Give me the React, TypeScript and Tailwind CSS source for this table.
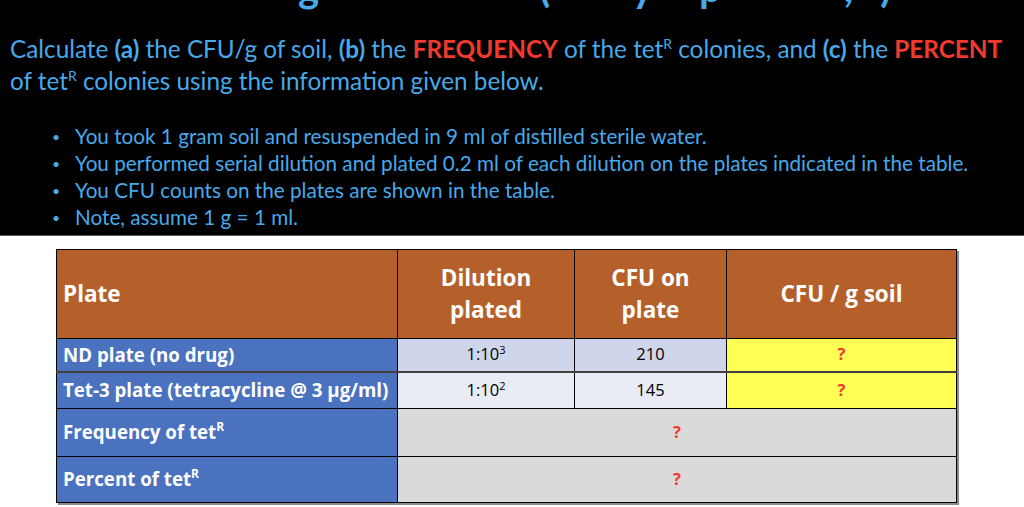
export default function App() {
  const tail = "relative -top-[33px] text-[40px] font-bold leading-[40px]";
  return (
    <div className="w-[1024px] h-[507px] bg-white overflow-hidden font-['Lato',sans-serif]">
      <div className="bg-black h-[236px] border-b border-[#595959] text-[#48a9ea]">
        {/* title of the slide, cut off at the top */}
        <div className="relative h-[10px] overflow-hidden">
          <span className={`absolute left-[298px] ${tail}`}>g</span>
          <span className={`absolute left-[518px] ${tail}`}>(</span>
          <span className={`absolute left-[600px] ${tail}`}>y</span>
          <span className={`absolute left-[646px] ${tail}`}>p</span>
          <span className={`absolute left-[768px] ${tail}`}>,</span>
          <span className={`absolute left-[795px] ${tail}`}>)</span>
        </div>
        <p className="mt-[23px] pl-[10px] text-[24.3px] leading-[32px]">
          Calculate <b>(a)</b> the CFU/g of soil, <b>(b)</b> the{" "}
          <b className="text-[#f23a2c]">FREQUENCY</b> of the tet<sup className="text-[14px] -top-[9px]">R</sup> colonies, and{" "}
          <b>(c)</b> the <b className="text-[#f23a2c]">PERCENT</b>
          <br />
          of tet<sup className="text-[14px] -top-[9px]">R</sup> colonies using the information given below.
        </p>
        <ul className="mt-[26px] pl-[52px] text-[20.7px] leading-[27px]">
          {[
            "You took 1 gram soil and resuspended in 9 ml of distilled sterile water.",
            "You performed serial dilution and plated 0.2 ml of each dilution on the plates indicated in the table.",
            "You CFU counts on the plates are shown in the table.",
            "Note, assume 1 g = 1 ml.",
          ].map((t) => (
            <li key={t} className="flex">
              <span className="w-[23px] shrink-0 text-[14px]">•</span>
              <span>{t}</span>
            </li>
          ))}
        </ul>
      </div>

      <table className="mt-[13px] ml-[56px] border-collapse table-fixed w-[900px] font-['Open_Sans',sans-serif] shadow-[2px_2px_0_#8a8a8a]">
        <colgroup>
          <col className="w-[341px]" />
          <col className="w-[177px]" />
          <col className="w-[152px]" />
          <col className="w-[230px]" />
        </colgroup>
        <thead>
          <tr className="h-[89px] bg-[#b55f2b] text-white font-bold text-[22.5px] leading-[32px]">
            <th className="border border-black text-left pl-[6px] font-bold">Plate</th>
            <th className="border border-black font-bold">
              Dilution
              <br />
              plated
            </th>
            <th className="border border-black font-bold">
              CFU on
              <br />
              plate
            </th>
            <th className="border border-black font-bold">CFU / g soil</th>
          </tr>
        </thead>
        <tbody className="text-[16.5px]">
          <tr className="h-[33px]">
            <td className="border border-black border-b-2 border-b-[#404040] bg-[#4a72bf] text-white font-bold text-[18.7px] pl-[6px]">
              ND plate (no drug)
            </td>
            <td className="border border-black border-b-2 border-b-[#404040] bg-[#cfd5ea] text-center">
              1:10<sup className="text-[11px] -top-[6px]">3</sup>
            </td>
            <td className="border border-black border-b-2 border-b-[#404040] bg-[#cfd5ea] text-center">210</td>
            <td className="border border-black border-b-2 border-b-[#404040] bg-[#ffff55] text-center text-[#ef3a2b] font-bold">?</td>
          </tr>
          <tr className="h-[37px]">
            <td className="border border-black bg-[#4a72bf] text-white font-bold text-[18.7px] pl-[6px] whitespace-nowrap">
              Tet-3 plate (tetracycline @ 3 µg/ml)
            </td>
            <td className="border border-black bg-[#e9ebf5] text-center">
              1:10<sup className="text-[11px] -top-[6px]">2</sup>
            </td>
            <td className="border border-black bg-[#e9ebf5] text-center">145</td>
            <td className="border border-black bg-[#ffff55] text-center text-[#ef3a2b] font-bold">?</td>
          </tr>
          <tr className="h-[48px]">
            <td className="border border-black bg-[#4a72bf] text-white font-bold text-[18.7px] pl-[6px]">
              Frequency of tet<sup className="text-[12px] -top-[8px]">R</sup>
            </td>
            <td colSpan={3} className="border border-black bg-[#dadada] text-center text-[#ef3a2b] font-bold">
              ?
            </td>
          </tr>
          <tr className="h-[46px]">
            <td className="border border-black bg-[#4a72bf] text-white font-bold text-[18.7px] pl-[6px]">
              Percent of tet<sup className="text-[12px] -top-[8px]">R</sup>
            </td>
            <td colSpan={3} className="border border-black bg-[#dadada] text-center text-[#ef3a2b] font-bold">
              ?
            </td>
          </tr>
        </tbody>
      </table>
    </div>
  );
}
